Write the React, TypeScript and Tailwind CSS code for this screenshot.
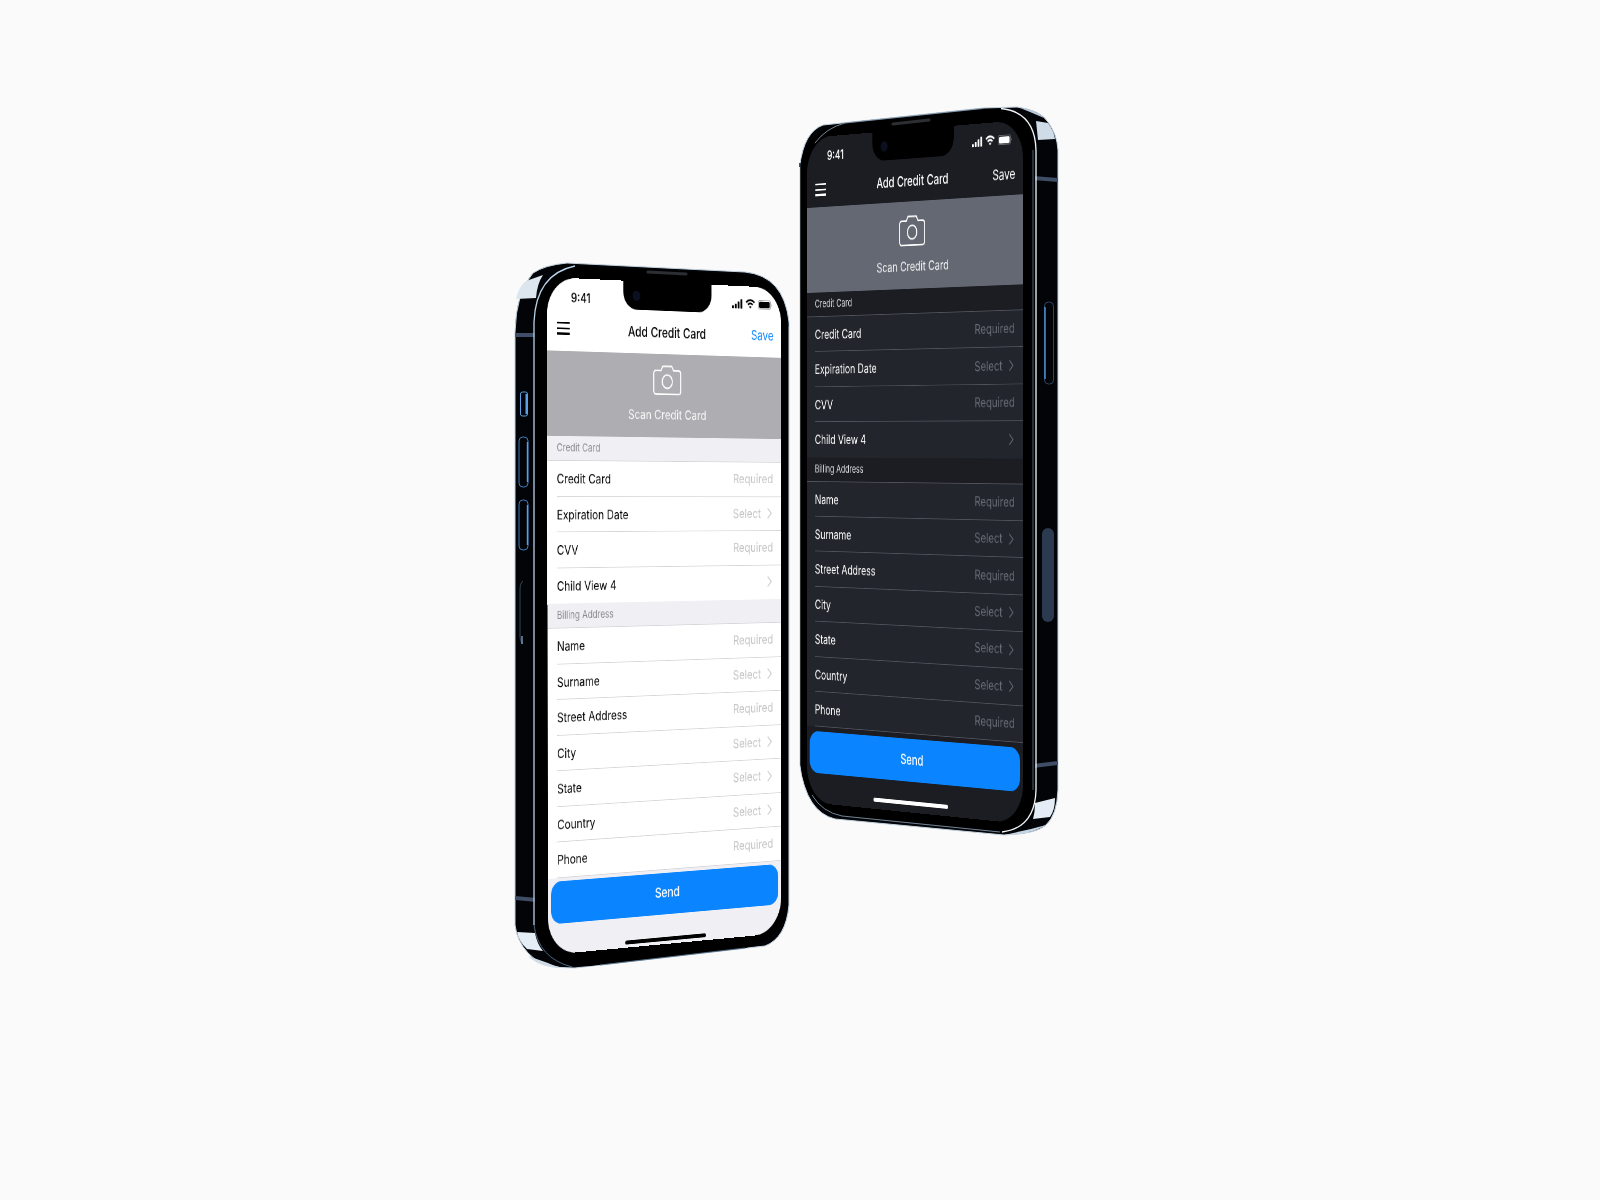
import { ChevronRight } from 'lucide-react';

type Pt = [number, number];

// maps a w x h box onto four page corners (tl, tr, br, bl)
function quadMatrix(w: number, h: number, q: [Pt, Pt, Pt, Pt]) {
  const [[x0, y0], [x1, y1], [x2, y2], [x3, y3]] = q;
  const dx1 = x1 - x2;
  const dx2 = x3 - x2;
  const dy1 = y1 - y2;
  const dy2 = y3 - y2;
  const sx = x0 - x1 + x2 - x3;
  const sy = y0 - y1 + y2 - y3;
  const det = dx1 * dy2 - dx2 * dy1;
  const g = (sx * dy2 - dx2 * sy) / det;
  const k = (dx1 * sy - sx * dy1) / det;
  const a = x1 - x0 + g * x1;
  const b = x3 - x0 + k * x3;
  const d = y1 - y0 + g * y1;
  const e = y3 - y0 + k * y3;
  return `matrix3d(${a / w},${d / w},0,${g / w},${b / h},${e / h},0,${k / h},0,0,1,0,${x0},${y0},0,1)`;
}

const themes = {
  light: {
    screen: 'bg-[#efeff4]',
    nav: 'h-[91px] bg-white text-black',
    save: 'top-[51px] text-[#0a84ff]',
    scan: 'h-[106px] pt-[14px] bg-[#aeaeb2]',
    section: 'h-[31px] bg-[#efeff4] text-[#8a8a8e]',
    row: 'h-[44.5px] bg-white text-black',
    line: 'border-[#d6d6da]',
    value: 'text-[#c4c4c7]',
    home: 'bg-black',
    homeGap: 'mt-[29px]',
    sendGap: 'mt-[4px]',
    bars: 'top-[55px]',
    icons: 'right-[15px] top-[16px]',
    ink: '#000000',
  },
  dark: {
    screen: 'bg-[#1b1d23]',
    nav: 'h-[89px] bg-[#1b1d23] text-white',
    save: 'top-[52px] text-white',
    scan: 'h-[108px] pt-[17px] bg-[#646872]',
    section: 'h-[31px] bg-[#1b1d23] text-[#dcdde0]',
    row: 'h-[44.4px] bg-[#22252c] text-white',
    line: 'border-[#50535b]',
    value: 'text-[#666a74]',
    home: 'bg-white',
    homeGap: 'mt-[24px]',
    sendGap: 'mt-[6px]',
    bars: 'top-[59px]',
    icons: 'right-[18px] top-[15px]',
    ink: '#ffffff',
  },
};

type Theme = (typeof themes)['light'];

const cardRows = [
  { label: 'Credit Card', value: 'Required' },
  { label: 'Expiration Date', value: 'Select', arrow: true },
  { label: 'CVV', value: 'Required' },
  { label: 'Child View 4', value: '', arrow: true, noLine: true },
];

const billingRows = [
  { label: 'Name', value: 'Required' },
  { label: 'Surname', value: 'Select', arrow: true },
  { label: 'Street Address', value: 'Required' },
  { label: 'City', value: 'Select', arrow: true },
  { label: 'State', value: 'Select', arrow: true },
  { label: 'Country', value: 'Select', arrow: true },
  { label: 'Phone', value: 'Required' },
];

function StatusIcons({ ink }: { ink: string }) {
  return (
    <div className="flex items-end gap-[5px]">
      <svg width="18" height="12" viewBox="0 0 26 16" fill={ink} preserveAspectRatio="none">
        <rect x="0" y="11" width="4.5" height="5" rx="1" />
        <rect x="7" y="8" width="4.5" height="8" rx="1" />
        <rect x="14" y="4" width="4.5" height="12" rx="1" />
        <rect x="21" y="0" width="4.5" height="16" rx="1" />
      </svg>
      <svg width="17" height="13" viewBox="0 0 22 17" fill="none" stroke={ink} strokeWidth="3">
        <path d="M1.5 6 Q11 -2 20.5 6" />
        <path d="M5.5 10 Q11 5 16.5 10" />
        <path d="M11 16.5 L8 13 Q11 11 14 13 Z" fill={ink} stroke="none" />
      </svg>
      <svg width="25" height="12" viewBox="0 0 34 16" fill="none" preserveAspectRatio="none">
        <rect x="0.5" y="0.5" width="29" height="15" rx="4" stroke={ink} strokeOpacity="0.45" />
        <rect x="2.5" y="2.5" width="25" height="11" rx="2.5" fill={ink} />
        <path d="M31.5 5.5 Q33.5 8 31.5 10.5 Z" fill={ink} fillOpacity="0.5" />
      </svg>
    </div>
  );
}

function Row({ t, label, value, arrow, noLine }: { t: Theme; label: string; value: string; arrow?: boolean; noLine?: boolean }) {
  return (
    <div className={`${t.row} shrink-0 pl-[15px]`}>
      <div className={`flex h-full items-center justify-between border-b pr-[14px] ${noLine ? 'border-transparent' : t.line}`}>
        <span className="mt-[1px] text-[16.2px] font-[420]">{label}</span>
        <span className={`flex items-center gap-[3px] text-[16.5px] ${t.value}`}>
          {value}
          {arrow && <ChevronRight size={24} strokeWidth={1.4} className="-mr-[6px]" />}
        </span>
      </div>
    </div>
  );
}

function Screen({ theme, quad }: { theme: Theme; quad: [Pt, Pt, Pt, Pt] }) {
  const t = theme;
  return (
    <div
      className={`absolute left-0 top-0 flex h-[844px] w-[390px] origin-top-left flex-col overflow-hidden rounded-[46px] font-['Inter',sans-serif] ${t.screen}`}
      style={{ transform: quadMatrix(390, 844, quad) }}
    >
      <div className={`relative shrink-0 ${t.nav}`}>
        <div className="absolute left-[123px] top-0 flex h-[36px] w-[147px] items-center rounded-b-[22px] bg-black pl-[15px]">
          <div className="h-[13px] w-[13px] rounded-full bg-[#0b1020]" />
        </div>
        <span className="absolute left-[38px] top-[12px] text-[16px] font-medium">9:41</span>
        <div className={`absolute ${t.icons}`}>
          <StatusIcons ink={t.ink} />
        </div>
        <div className={`absolute left-[16px] flex w-[20px] flex-col gap-[4.5px] ${t.bars}`}>
          <div className={`h-[2.2px] ${t.home}`} />
          <div className={`h-[2.2px] ${t.home}`} />
          <div className={`h-[2.2px] ${t.home}`} />
        </div>
        <span className="absolute inset-x-0 top-[52px] pl-[1px] text-center text-[17px] font-medium">Add Credit Card</span>
        <span className={`absolute right-[13px] text-[17px] ${t.save}`}>Save</span>
      </div>
      <div className={`flex shrink-0 flex-col items-center text-white ${t.scan}`}>
        <svg width="47" height="38" viewBox="0 0 47 38" fill="none" stroke="#ffffff" strokeWidth="1.8" strokeLinejoin="round">
          <path d="M5 7 H13 L16 1.5 H31 L34 7 H42 Q46 7 46 11 V33 Q46 37 42 37 H5 Q1 37 1 33 V11 Q1 7 5 7 Z" />
          <circle cx="23.5" cy="21" r="8.5" />
        </svg>
        <span className="mt-[13px] pl-[2px] text-[16.2px] text-white/90">Scan Credit Card</span>
      </div>
      <div className={`flex shrink-0 items-center border-b pl-[15px] text-[13px] ${t.section} ${t.line}`}>Credit Card</div>
      {cardRows.map((r) => (
        <Row key={r.label} t={t} {...r} />
      ))}
      <div className={`flex shrink-0 items-center border-b pl-[15px] text-[13px] ${t.section} ${t.line}`}>Billing Address</div>
      {billingRows.map((r) => (
        <Row key={r.label} t={t} {...r} />
      ))}
      <div className={`mx-[5px] flex h-[53px] shrink-0 items-center justify-center rounded-[16px] bg-[#0a84ff] text-[17px] font-medium text-white ${t.sendGap}`}>
        Send
      </div>
      <div className={`ml-[125px] h-[5px] w-[135px] shrink-0 rounded-full ${t.home} ${t.homeGap}`} />
    </div>
  );
}

function LightFrame() {
  return (
    <svg className="absolute left-0 top-0" width="1600" height="1200" viewBox="0 0 1600 1200" fill="none">
      <path d="M515 332 Q516 292 533 273 Q545 265 567 263 L745 272 Q784 276 789 322 L789 905 Q786 938 765 946 L575 968 Q541 969 528 953 Q517 941 515 925 Z" fill="#020407" stroke="#c4d3e0" strokeWidth="1" />
      {/* corner reflections of the band */}
      <path d="M516 299 Q519 286 526 281 L543 275 Q537 284 536 298 Z" fill="#dbe6ef" />
      <path d="M517 932 L535 933 Q537 944 543 951 L527 949 Q519 942 517 932 Z" fill="#e6eef5" />
      <path d="M528 956 L548 963 Q556 967 566 968 Q541 969 528 956 Z" fill="#cfdbe6" />
      {/* antenna lines */}
      <path d="M515 333 L537 333 L537 337 L515 337 Z" fill="#3f4d66" />
      <path d="M515 896 L537 898 L537 902 L515 900 Z" fill="#3f4d66" />
      <path d="M786 323 L789 323 L789 327 L786 327 Z" fill="#3f4d66" />
      {/* buttons */}
      <rect x="520.500" y="392" width="7" height="24" rx="2" stroke="#5b9fe6" />
      <path d="M526.500 394 V414" stroke="#5b9fe6" strokeWidth="2" />
      <rect x="519" y="437" width="9" height="50" rx="4" stroke="#3d78bd" />
      <path d="M527.500 442 V482" stroke="#5b9fe6" strokeWidth="1.4" />
      <rect x="519" y="500" width="9" height="50" rx="4" stroke="#3d78bd" />
      <path d="M527.500 505 V545" stroke="#5b9fe6" strokeWidth="1.4" />
      <path d="M523 581 Q520 583 520 590 V636 Q520 642 523 643" stroke="#34465c" />
      <path d="M522 636 V644" stroke="#8fb8de" strokeWidth="1.2" />
      {/* front face and its rim */}
      <path d="M534.500 322 Q536 274 575 266 L740 274 Q785 278 788 325 L788 900 Q787 938 745 948 L590 966 Q540 969 534.500 925 Z" fill="#000000" />
      <path d="M534 925 V322 Q536 274 575 266" stroke="#b7d0e6" strokeWidth="1.3" />
      <path d="M534 925 Q538 958 572 967 M600 965 L745 948" stroke="#56708a" strokeWidth="0.9" />
      <path d="M648 272 L686 274" stroke="#2c2e33" strokeWidth="3" strokeLinecap="round" />
    </svg>
  );
}

function DarkFrame() {
  return (
    <svg className="absolute left-0 top-0" width="1600" height="1200" viewBox="0 0 1600 1200" fill="none">
      <path d="M800 165 Q804 132 823 125 L983 108 L1017 107 Q1040 110 1048 122 Q1057 134 1058 150 L1058 790 Q1057 815 1046 825 Q1036 834 1004 835 L835 819 Q806 812 800 765 Z" fill="#020407" stroke="#c4d3e0" strokeWidth="1" />
      <path d="M1036 121 L1048 123 Q1054 131 1055 139 L1038 140 Q1037 130 1036 121 Z" fill="#cfdce8" />
      <path d="M1020 108 Q1035 109 1044 118 L1030 112 Z" fill="#b8c9d9" />
      <path d="M1035 803 L1055 798 Q1055 810 1050 817 L1033 819 Q1035 812 1035 803 Z" fill="#e4edf5" />
      <path d="M1004 835 Q1030 835 1046 825 L1031 829 Z" fill="#c6d6e4" />
      <path d="M1033 176 L1058 178 L1058 182 L1033 180 Z" fill="#3f4d66" />
      <path d="M1033 764 L1058 761 L1058 765 L1033 768 Z" fill="#3f4d66" />
      <path d="M799 163 L802 163 L802 167 L799 167 Z" fill="#3f4d66" />
      <rect x="1044.500" y="302" width="9" height="82" rx="4" stroke="#2f4560" />
      <path d="M1045 307 V379" stroke="#4a8fd8" strokeWidth="1.5" />
      <rect x="1042" y="528" width="12" height="94" rx="6" fill="#2c3a50" />
      <path d="M800.500 165 Q804 134 840 124 L983 109 L1015 110 Q1035 118 1035 150 L1035 790 Q1034 826 1005 832 L840 816 Q805 808 800.500 765 Z" fill="#000000" />
      <path d="M1001 108.500 Q1035 112 1036 150 V790 Q1035 828 1002 832" stroke="#f1f5f9" strokeWidth="1.3" />
      <path d="M1033 150 V790" stroke="#5a7894" strokeWidth="0.8" />
      <path d="M815 143 Q826 128 845 123 L983 108.500 M812 795 Q822 812 842 816 L1000 832" stroke="#7f93a8" strokeWidth="0.9" />
      <path d="M893 124 L929 120" stroke="#2c2e33" strokeWidth="3" strokeLinecap="round" />
    </svg>
  );
}

export default function App() {
  return (
    <div className="relative h-[1200px] w-[1600px] overflow-hidden bg-[#fafafa]">
      <LightFrame />
      <Screen theme={themes.light} quad={[[547, 277], [781, 288], [781, 933], [548, 955]]} />
      <DarkFrame />
      <Screen theme={themes.dark} quad={[[807, 138], [1023, 120], [1023, 824], [807, 802]]} />
    </div>
  );
}
